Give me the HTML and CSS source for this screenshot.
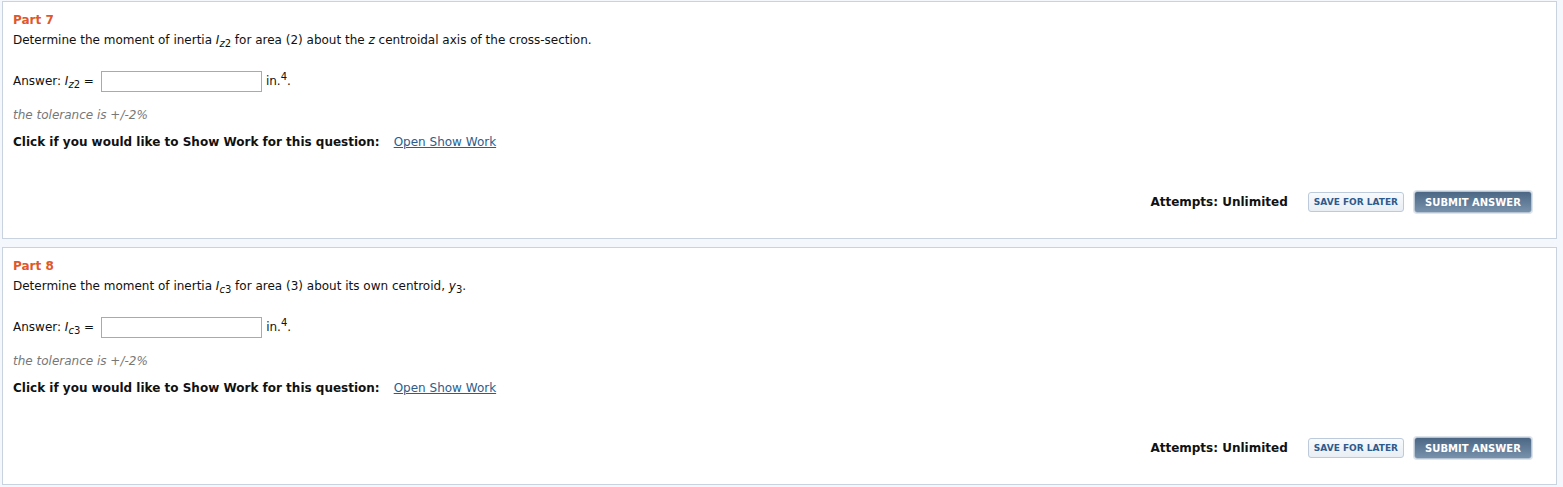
FILE: index.html
```html
<!DOCTYPE html>
<html>
<head>
    <meta charset='utf-8'>
    <title>Parts 7 and 8</title>
    <link rel="stylesheet" href="styles.css">
</head>
<body>
    <div class="part">
        <div class="partTitle">Part 7</div>
        <div class="question">Determine the moment of inertia <i>I</i><sub><i>z</i>2</sub> for area (2) about the <i>z</i> centroidal axis of the cross-section.</div>
        <div class="answerRow">
            <span>Answer: <i>I</i><sub><i>z</i>2</sub> =</span>
            <input type="text" class="answerBox">
            <span>in.<sup>4</sup>.</span>
        </div>
        <div class="tolerance">the tolerance is +/-2%</div>
        <div class="showWork"><b>Click if you would like to Show Work for this question:</b><a href="#">Open Show Work</a></div>
        <div class="actions">
            <span class="attempts">Attempts: Unlimited</span>
            <button class="saveBtn">SAVE FOR LATER</button>
            <button class="submitBtn">SUBMIT ANSWER</button>
        </div>
    </div>
    <div class="part">
        <div class="partTitle">Part 8</div>
        <div class="question">Determine the moment of inertia <i>I</i><sub><i>c</i>3</sub> for area (3) about its own centroid, <i>y</i><sub>3</sub>.</div>
        <div class="answerRow">
            <span>Answer: <i>I</i><sub><i>c</i>3</sub> =</span>
            <input type="text" class="answerBox">
            <span>in.<sup>4</sup>.</span>
        </div>
        <div class="tolerance">the tolerance is +/-2%</div>
        <div class="showWork"><b>Click if you would like to Show Work for this question:</b><a href="#">Open Show Work</a></div>
        <div class="actions">
            <span class="attempts">Attempts: Unlimited</span>
            <button class="saveBtn">SAVE FOR LATER</button>
            <button class="submitBtn">SUBMIT ANSWER</button>
        </div>
    </div>
</body>
</html>
```

FILE: styles.css
```css
body {
    margin: 0;
    padding-top: 1px;
    background: #f4f7fb;
    font-family: "DejaVu Sans", Verdana, sans-serif;
    font-size: 12px;
    color: #111;
}
.part {
    box-sizing: border-box;
    height: 238px;
    margin: 0 6px 8px 2px;
    padding: 10px 24px 0 10px;
    background: #fff;
    border: 1px solid #c9d3e0;
}
.partTitle {
    color: #e0582a;
    font-weight: bold;
    line-height: 16px;
}
.question {
    margin-top: 4px;
    line-height: 16px;
}
sub, sup {
    font-size: 10px;
    line-height: 0;
}
.answerRow {
    display: flex;
    align-items: center;
    margin-top: 23px;
    height: 20px;
}
.answerBox {
    box-sizing: border-box;
    width: 161px;
    height: 21px;
    margin: 0 4px 0 7px;
    border: 1px solid #aaa;
    padding: 0 3px;
}
.tolerance {
    margin-top: 16px;
    color: #777;
    font-style: italic;
    line-height: 16px;
}
.showWork {
    margin-top: 11px;
    line-height: 16px;
}
.showWork a {
    margin-left: 14px;
    color: #2b5d8c;
}
.actions {
    display: flex;
    justify-content: flex-end;
    align-items: center;
    margin-top: 41px;
}
.attempts {
    font-size: 12px;
    font-weight: bold;
    margin-right: 20px;
}
.saveBtn {
    height: 20px;
    padding: 0 5px;
    margin-right: 10px;
    font-family: inherit;
    font-size: 9px;
    font-weight: bold;
    color: #2d5b8e;
    background: linear-gradient(#f8fafc, #e8eef4);
    border: 1px solid #bccadb;
    border-radius: 3px;
}
.submitBtn {
    height: 22px;
    width: 118px;
    font-family: inherit;
    font-size: 10px;
    font-weight: bold;
    color: #fff;
    background: linear-gradient(#4b6785, #7891ab);
    border: 1px solid #b6c3d2;
    border-radius: 3px;
    box-shadow: 0 0 0 1px #dde4ec;
}
```
